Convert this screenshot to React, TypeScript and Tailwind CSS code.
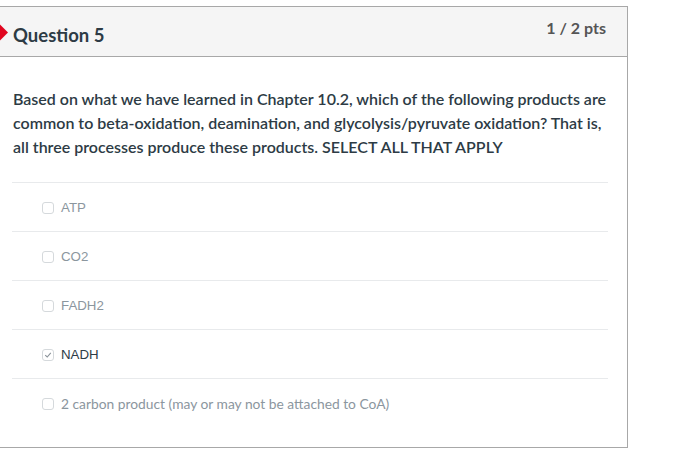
import React from "react";

const answers = [
  { label: "ATP", checked: false, font: "arial" },
  { label: "CO2", checked: false, font: "arial" },
  { label: "FADH2", checked: false, font: "arial" },
  { label: "NADH", checked: true, font: "arial" },
  { label: "2 carbon product (may or may not be attached to CoA)", checked: false, font: "lato" },
];

function Box({ checked }: { checked: boolean }) {
  return (
    <span className="w-[12px] h-[12px] rounded-[3px] border border-[#d5d9dc] bg-white flex items-center justify-center shrink-0">
      {checked && (
        <svg width="8" height="8" viewBox="0 0 8 8">
          <path d="M1.2 4.2 L3.2 6 L6.8 1.8" fill="none" stroke="#8a9299" strokeWidth="1.1" />
        </svg>
      )}
    </span>
  );
}

export default function App() {
  return (
    <div className="w-[681px] h-[453px] bg-white pt-[6px] relative font-['Lato',sans-serif]">
      <div className="w-[629px] border-r border-t border-b border-[#a8a8a8] ml-[-1px] border-l h-[442px] relative">
        <div className="h-[50px] bg-[#f5f5f5] border-b border-[#a8a8a8] flex items-center justify-between pl-[13px] pr-[21px]">
          <span className="text-[18.5px] font-bold text-[#2d3b45] mt-[9px]">Question 5</span>
          <span className="text-[16px] font-bold text-[#555555] mt-[-7px]">1 / 2 pts</span>
        </div>
        <div className="px-[12px] pt-[30px]">
          <p className="text-[16px] leading-[24px] font-semibold text-[#2d3b45] pl-[1px] w-[600px]">
            Based on what we have learned in Chapter 10.2, which of the following products are common to beta-oxidation, deamination, and glycolysis/pyruvate oxidation? That is, all three processes produce these products. SELECT ALL THAT APPLY
          </p>
          <div className="mt-[23px] w-[596px]">
            {answers.map((a, i) => (
              <div
                key={i}
                className="h-[49px] flex items-center gap-[7px] pl-[30px] pt-[2px] border-t border-[#e8eaec]"
              >
                <Box checked={a.checked} />
                <span
                  className={`${
                    a.font === "lato" ? "font-['Lato',sans-serif] text-[13.8px]" : "font-['Liberation_Sans',Arial,sans-serif] text-[13.3px]"
                  } ${a.checked ? "text-[#2d3b45]" : "text-[#8b969e]"}`}
                >
                  {a.label}
                </span>
              </div>
            ))}
          </div>
        </div>
      </div>
      <svg className="absolute left-0 top-[24px]" width="8" height="17" viewBox="0 0 8 17">
        <path d="M-8 8.5 L0 0.5 L8 8.5 L0 16.5 Z" fill="#e0061f" />
      </svg>
    </div>
  );
}
